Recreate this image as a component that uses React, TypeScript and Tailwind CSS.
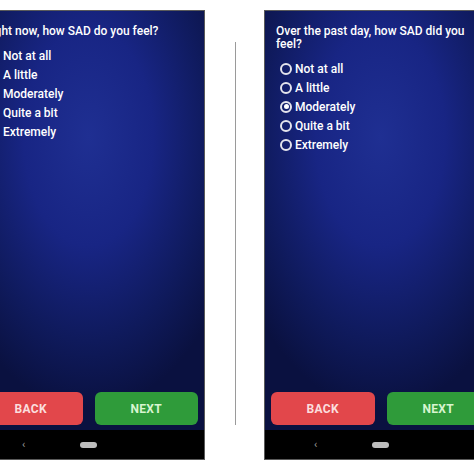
import React from 'react';

const OPTIONS = ['Not at all', 'A little', 'Moderately', 'Quite a bit', 'Extremely'];

const Radio: React.FC<{ checked?: boolean }> = ({ checked }) => (
  <span className="w-[12px] h-[12px] rounded-full border-[2px] border-[#e4e4ec] flex items-center justify-center shrink-0">
    {checked && <span className="w-[5px] h-[5px] rounded-full bg-white" />}
  </span>
);

const Phone: React.FC<{ question: string; selected?: number }> = ({ question, selected }) => (
  <div className="w-[233px] h-[450px] mt-[10px] shrink-0 flex flex-col border border-[#5a5a5a] bg-black">
    <div className="flex-1 flex flex-col bg-[radial-gradient(ellipse_70%_65%_at_50%_30%,#1f2f92_0%,#182584_40%,#0f1a5c_75%,#0a1140_100%)]">
      <div className="pt-[14px] px-[11px] pr-[8px]">
        <p className="text-[12px] leading-[13px] font-medium text-white">{question}</p>
        <ul className="mt-[8px] pl-[4px]">
          {OPTIONS.map((opt, i) => (
            <li key={opt} className="h-[19px] flex items-center gap-[3px] text-[12px] font-medium text-white">
              <Radio checked={selected === i} />
              <span>{opt}</span>
            </li>
          ))}
        </ul>
      </div>
      <div className="mt-auto px-[6px] pb-[5px] flex gap-[12px]">
        <button className="flex-1 h-[33px] rounded-[6px] bg-[#e2474b] text-[#fbdede] text-[12px] font-bold tracking-wide">
          BACK
        </button>
        <button className="flex-1 h-[33px] rounded-[6px] bg-[#2f9b3a] text-[#d8f5d0] text-[12px] font-bold tracking-wide">
          NEXT
        </button>
      </div>
    </div>
    <div className="h-[29px] bg-black relative flex items-center justify-center">
      <span className="absolute left-[49px] text-[#9a9a9a] text-[11px] leading-none">‹</span>
      <span className="w-[17px] h-[6px] rounded-full bg-[#bdbdbd]" />
    </div>
  </div>
);

export default function App() {
  return (
    <div
      className="w-[474px] h-[474px] bg-white overflow-hidden flex items-start"
      style={{ fontFamily: 'Roboto, "Noto Sans", sans-serif' }}
    >
      <div className="ml-[-28px] flex items-start shrink-0">
        <Phone question="Right now, how SAD do you feel?" />
        <div className="w-px h-[383px] mt-[42px] ml-[30px] mr-[28px] bg-[#9a9a9a] shrink-0" />
        <Phone question="Over the past day, how SAD did you feel?" selected={2} />
      </div>
    </div>
  );
}
